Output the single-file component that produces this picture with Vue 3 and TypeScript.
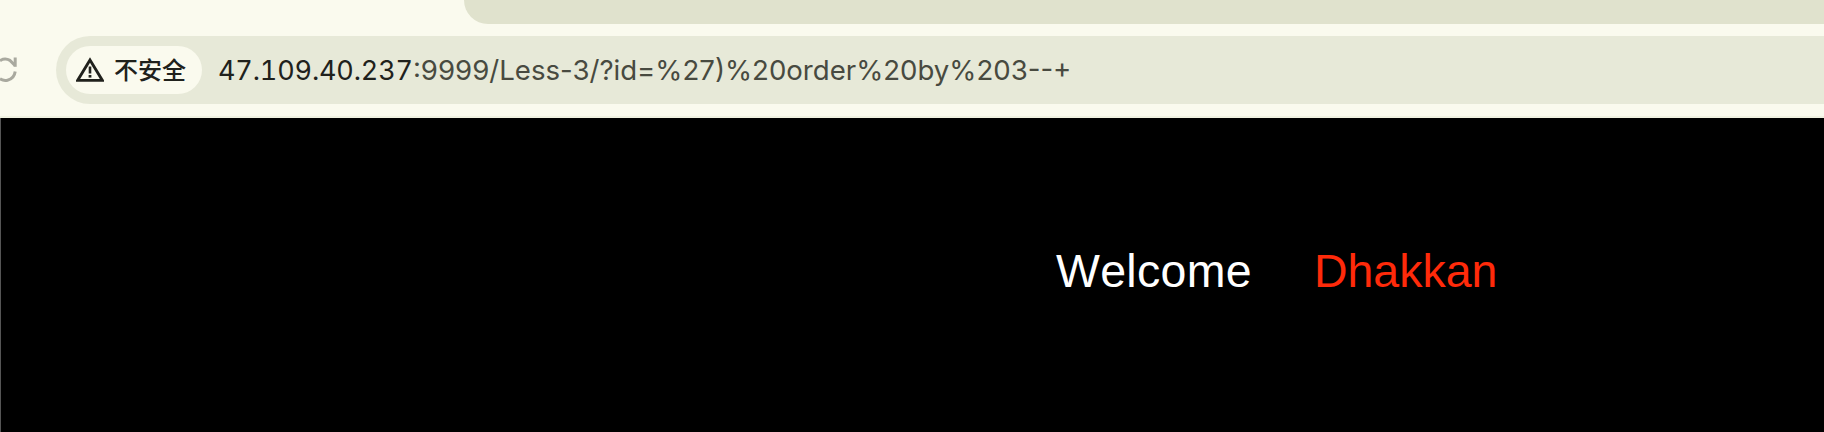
<script setup lang="ts">
const host = '47.109.40.237'
const rest = ':9999/Less-3/?id=%27)%20order%20by%203--+'
</script>

<template>
  <div class="page">
    <div class="tabstrip"><div class="tab"></div></div>
    <header class="toolbar">
      <svg class="reload" width="18" height="26" viewBox="0 0 18 26" fill="none" stroke="#a9a99f" stroke-width="3">
        <path d="M0 3.6 C3 1.8 7 1.7 10 3.4 L15 8.4" />
        <path d="M15.2 0.5 V9.8" />
        <path d="M0 21.8 C2.4 23.4 5 23.8 7.5 23.2 C11.4 22.3 14.6 19 15.2 14.5" />
      </svg>
      <div class="omnibox">
        <div class="chip">
          <svg width="28" height="26" viewBox="0 0 28 26" fill="none">
            <path d="M14 3 L26.4 23.4 H1.6 Z" stroke="#20211c" stroke-width="2.8" stroke-linejoin="miter" />
            <path d="M14 9.5 V16.5" stroke="#20211c" stroke-width="2.6" />
            <path d="M14 18 V20.6" stroke="#20211c" stroke-width="2.8" />
          </svg>
          <span class="chip-text">不安全</span>
        </div>
        <div class="url"><span class="host">{{ host }}</span><span class="rest">{{ rest }}</span></div>
      </div>
    </header>
    <main class="content">
      <div class="welcome"><span class="white">Welcome</span><span class="red">Dhakkan</span></div>
    </main>
  </div>
</template>

<style scoped>
.page {
  width: 1824px;
  height: 432px;
  overflow: hidden;
  background: #000;
  display: flex;
  flex-direction: column;
}
.tabstrip {
  height: 24px;
  background: #fafaee;
  padding-left: 464px;
  flex: none;
}
.tab {
  height: 100%;
  background: #e0e2cd;
  border-bottom-left-radius: 24px;
}
.toolbar {
  height: 94px;
  flex: none;
  box-sizing: border-box;
  background: #fafaee;
  border-bottom: 2px solid #f0f2e1;
  display: flex;
  align-items: flex-start;
  padding-top: 12px;
  position: relative;
}
.reload {
  position: absolute;
  left: 0;
  top: 33px;
}
.omnibox {
  margin-left: 56px;
  flex: 1;
  height: 68px;
  background: #e7e9d8;
  border-radius: 34px 0 0 34px;
  display: flex;
  align-items: center;
  padding-left: 10px;
}
.chip {
  width: 136px;
  height: 48px;
  box-sizing: border-box;
  background: #fafaee;
  border-radius: 24px;
  display: flex;
  align-items: center;
  gap: 10px;
  padding-left: 10px;
}
.chip-text {
  font-family: "Noto Sans CJK SC", sans-serif;
  font-size: 24px;
  font-weight: 500;
  color: #20211c;
  padding-bottom: 4px;
}
.url {
  margin-left: 16px;
  font-family: Inter, sans-serif;
  font-size: 27px;
  white-space: nowrap;
}
.host {
  color: #20211c;
  font-feature-settings: "tnum";
  letter-spacing: -0.15px;
}
.rest {
  color: #484a40;
  font-size: 27.6px;
}
.content {
  flex: 1;
  background: #000;
  border-left: 1px solid #555;
  padding-top: 125px;
  padding-left: 1055px;
}
.welcome {
  display: flex;
  gap: 62px;
  font-family: "Liberation Sans", Arial, sans-serif;
  font-size: 46.5px;
  line-height: 56px;
  font-kerning: none;
}
.white {
  color: #fff;
  letter-spacing: 0.3px;
}
.red {
  color: #ff2a0a;
}
</style>
